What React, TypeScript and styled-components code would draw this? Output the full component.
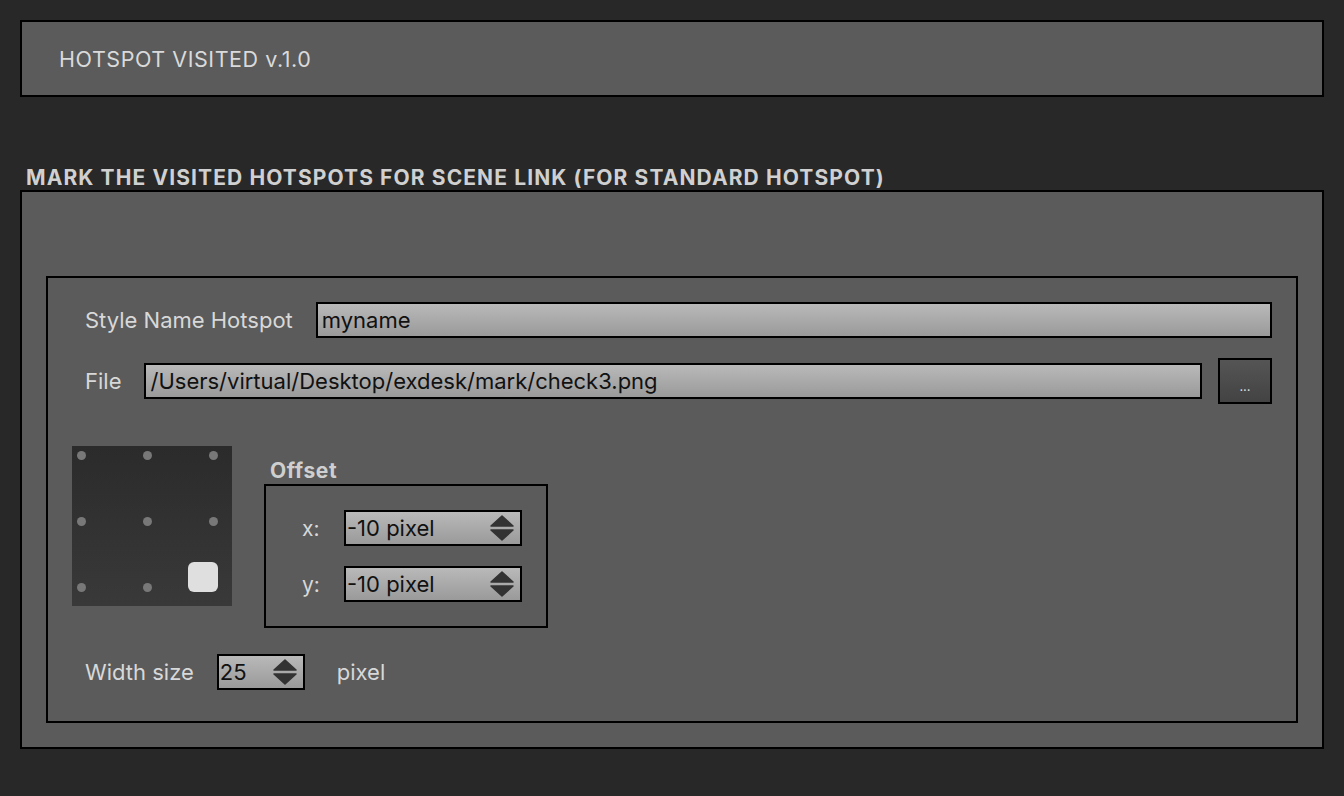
import React from "react";
import styled, { createGlobalStyle } from "styled-components";

const GlobalStyle = createGlobalStyle`
  html, body {
    margin: 0;
    padding: 0;
    background: #282828;
    font-family: Inter, "Open Sans", "Liberation Sans", sans-serif;
  }
  * {
    box-sizing: border-box;
  }
`;

const Spinner = () => (
  <svg width="24" height="28" viewBox="0 0 24 28">
    <path d="M12 2 L23 12 L1 12 Z" fill="#333" stroke="#333" strokeLinejoin="round" strokeWidth="1.5" />
    <path d="M1 16 L23 16 L12 26 Z" fill="#333" stroke="#333" strokeLinejoin="round" strokeWidth="1.5" />
  </svg>
);

const App = () => {
  const anchors = [0, 1, 2, 3, 4, 5, 6, 7, 8];
  const selected = 8;

  return (
    <Page>
      <GlobalStyle />
      <Header>HOTSPOT VISITED v.1.0</Header>
      <SectionTitle>
        MARK THE VISITED HOTSPOTS FOR SCENE LINK (FOR STANDARD HOTSPOT)
      </SectionTitle>
      <Panel>
        <InnerPanel>
          <Row>
            <Label>Style Name Hotspot</Label>
            <TextField>myname</TextField>
          </Row>
          <Row>
            <Label>File</Label>
            <TextField>/Users/virtual/Desktop/exdesk/mark/check3.png</TextField>
            <BrowseButton>...</BrowseButton>
          </Row>
          <PositionArea>
            <AnchorGrid>
              {anchors.map((i) => (
                <AnchorCell key={i}>
                  {i === selected ? <AnchorSelected /> : <AnchorDot />}
                </AnchorCell>
              ))}
            </AnchorGrid>
            <OffsetGroup>
              <GroupTitle>Offset</GroupTitle>
              <GroupBox>
                <OffsetRow>
                  <AxisLabel>x:</AxisLabel>
                  <Select>
                    <span>-10 pixel</span>
                    <Spinner />
                  </Select>
                </OffsetRow>
                <OffsetRow>
                  <AxisLabel>y:</AxisLabel>
                  <Select>
                    <span>-10 pixel</span>
                    <Spinner />
                  </Select>
                </OffsetRow>
              </GroupBox>
            </OffsetGroup>
          </PositionArea>
          <SizeRow>
            <Label>Width size</Label>
            <SmallSelect>
              <span>25</span>
              <Spinner />
            </SmallSelect>
            <Label>pixel</Label>
          </SizeRow>
        </InnerPanel>
      </Panel>
    </Page>
  );
};

const Page = styled.div`
  padding: 20px 20px 45px 20px;
  min-height: 796px;
  background: #282828;
`;

const Header = styled.div`
  height: 77px;
  border: 2px solid #000;
  background: #5b5b5b;
  display: flex;
  align-items: center;
  padding-left: 37px;
  padding-top: 1px;
  color: #dadada;
  font-size: 21.5px;
  font-weight: 400;
  letter-spacing: 0.55px;
`;

const SectionTitle = styled.div`
  margin-top: 69px;
  height: 24px;
  line-height: 24px;
  padding-left: 6px;
  color: #d0d0d0;
  font-size: 21px;
  font-weight: 700;
  letter-spacing: 1.1px;
  white-space: nowrap;
`;

const Panel = styled.div`
  border: 2px solid #000;
  background: #5b5b5b;
  padding: 84px 24px 24px 24px;
`;

const InnerPanel = styled.div`
  border: 2px solid #000;
  padding: 24px 24px 31px 37px;
  display: flex;
  flex-direction: column;
`;

const Row = styled.div`
  display: flex;
  align-items: center;
  gap: 23px;
  min-height: 36px;
  & + & {
    margin-top: 20px;
  }
`;

const Label = styled.span`
  color: #d8d8d8;
  font-size: 22px;
  font-weight: 400;
  white-space: nowrap;
`;

const TextField = styled.div`
  flex: 1;
  height: 36px;
  border: 2px solid #000;
  background: linear-gradient(#b9b9b9, #9a9a9a);
  color: #111;
  font-size: 22px;
  display: flex;
  align-items: center;
  padding-left: 4px;
  white-space: nowrap;
  overflow: hidden;
`;

const BrowseButton = styled.div`
  width: 54px;
  height: 46px;
  margin-left: -7px;
  border: 2px solid #000;
  background: linear-gradient(#555, #434343);
  color: #ddd;
  font-size: 13px;
  display: flex;
  align-items: center;
  justify-content: center;
  padding-top: 10px;
`;

const PositionArea = styled.div`
  display: flex;
  align-items: flex-start;
  gap: 32px;
  margin-top: 42px;
  margin-left: -13px;
`;

const AnchorGrid = styled.div`
  width: 160px;
  height: 160px;
  background: linear-gradient(#2b2b2b, #393939);
  display: grid;
  grid-template-columns: repeat(3, 66px);
  grid-template-rows: repeat(3, 66px);
  padding: 5px 0 0 5px;
`;

const AnchorCell = styled.div`
  position: relative;
`;

const AnchorDot = styled.div`
  width: 9px;
  height: 9px;
  border-radius: 50%;
  background: #787878;
`;

const AnchorSelected = styled.div`
  position: absolute;
  left: -21px;
  top: -21px;
  width: 30px;
  height: 30px;
  border-radius: 6px;
  background: #dfdfdf;
`;

const OffsetGroup = styled.div`
  margin-top: 12px;
  display: flex;
  flex-direction: column;
`;

const GroupTitle = styled.div`
  height: 26px;
  line-height: 26px;
  padding-left: 6px;
  color: #cfcfcf;
  font-size: 21px;
  font-weight: 700;
  letter-spacing: 0.6px;
`;

const GroupBox = styled.div`
  width: 284px;
  height: 144px;
  border: 2px solid #000;
  padding: 24px 24px 24px 36px;
  display: flex;
  flex-direction: column;
  gap: 20px;
`;

const OffsetRow = styled.div`
  display: flex;
  align-items: center;
`;

const AxisLabel = styled.span`
  width: 42px;
  color: #d8d8d8;
  font-size: 21px;
`;

const Select = styled.div`
  width: 178px;
  height: 36px;
  border: 2px solid #000;
  background: linear-gradient(#b9b9b9, #9a9a9a);
  color: #111;
  font-size: 22px;
  display: flex;
  align-items: center;
  justify-content: space-between;
  padding: 0 6px 0 1px;
`;

const SmallSelect = styled(Select)`
  width: 88px;
  margin-right: 9px;
`;

const SizeRow = styled(Row)`
  margin-top: 26px;
`;

export default App;
